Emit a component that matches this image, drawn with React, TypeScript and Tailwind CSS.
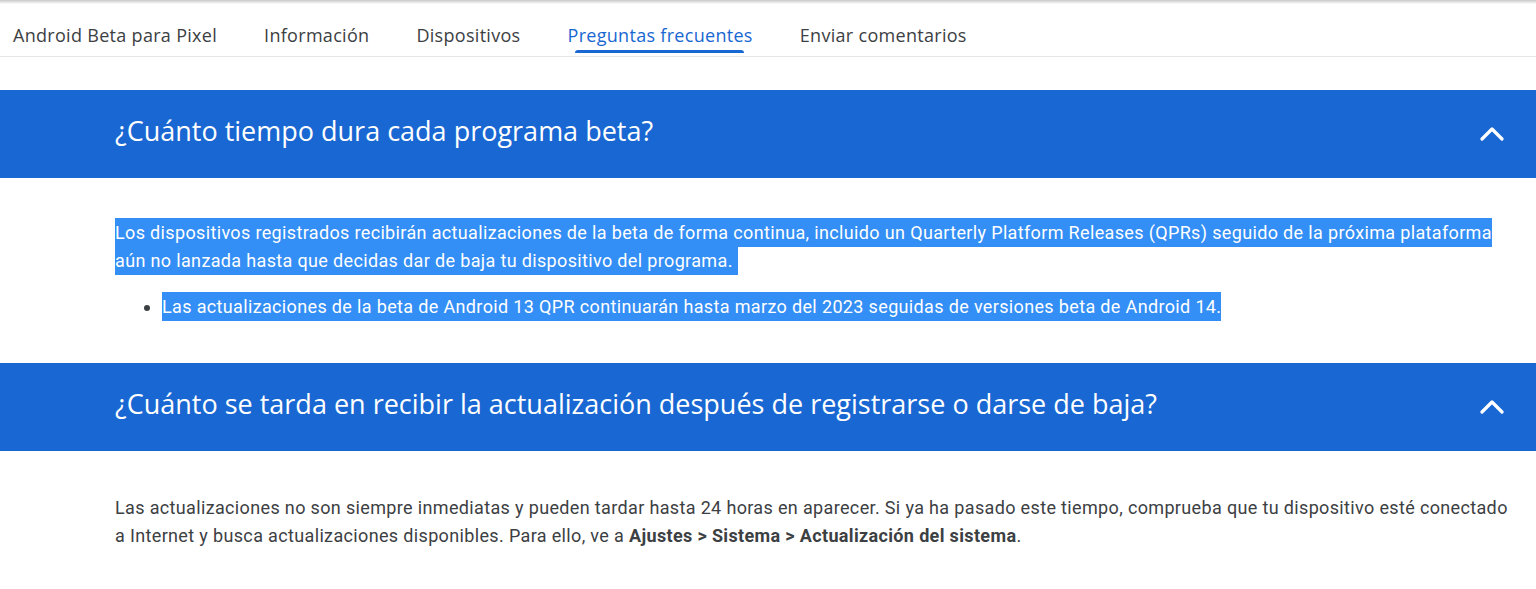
import React from "react";

const tabs = ["Android Beta para Pixel", "Información", "Dispositivos", "Preguntas frecuentes", "Enviar comentarios"];

function Chevron() {
  return (
    <svg width="24" height="24" viewBox="0 0 24 24" className="shrink-0">
      <polyline points="2,17 12,7 22,17" fill="none" stroke="white" strokeWidth="3.2" strokeLinecap="round" strokeLinejoin="round" />
    </svg>
  );
}

function Bar({ title }: { title: string }) {
  return (
    <div className="flex h-[88px] items-center justify-between bg-[#1967d2] pl-[115px] pr-[32px]">
      <h2 className="pb-[5px] text-[27px] text-white" style={{ fontFamily: '"Open Sans", sans-serif' }}>
        {title}
      </h2>
      <Chevron />
    </div>
  );
}

const sel = "bg-[#338ef5] py-[4px] text-white";

export default function App() {
  return (
    <div className="h-screen overflow-hidden bg-white">
      <div className="h-[4px] bg-gradient-to-b from-[#c8c8c8] to-white" />
      <nav
        className="flex h-[53px] items-stretch gap-[47px] border-b border-[#e4e6e8] pl-[13px]"
        style={{ fontFamily: '"Open Sans", sans-serif' }}
      >
        {tabs.map((t) => {
          const active = t === "Preguntas frecuentes";
          return (
            <div key={t} className="relative flex items-center pt-[10px]">
              <span className={`text-[18px] font-medium tracking-[0.3px] ${active ? "text-[#1967d2]" : "text-[#3c4043]"}`}>{t}</span>
              {active && <div className="absolute bottom-[3px] left-[7px] right-[9px] h-[3px] rounded-t-[3px] bg-[#1967d2]" />}
            </div>
          );
        })}
      </nav>

      <div className="mt-[33px]" style={{ fontFamily: 'Roboto, "Liberation Sans", sans-serif' }}>
        <Bar title="¿Cuánto tiempo dura cada programa beta?" />
        <div className="pb-[42px] pl-[115px] pr-[16px] pt-[41px] text-[18px] leading-[28px] tracking-[0.35px] text-[#3c4043]">
          <p>
            <span className={sel}>
              Los dispositivos registrados recibirán actualizaciones de la beta de forma continua, incluido un Quarterly Platform Releases (QPRs) seguido de la próxima plataforma aún no lanzada hasta que decidas dar de baja tu dispositivo del programa.&nbsp;
            </span>
          </p>
          <ul className="mt-[18px] list-disc pl-[47px]">
            <li>
              <span className={sel}>
                Las actualizaciones de la beta de Android 13 QPR continuarán hasta marzo del 2023 seguidas de versiones beta de Android 14.
              </span>
            </li>
          </ul>
        </div>

        <Bar title="¿Cuánto se tarda en recibir la actualización después de registrarse o darse de baja?" />
        <div className="pl-[115px] pr-[16px] pt-[43px] text-[18px] leading-[28px] tracking-[0.35px] text-[#3c4043]">
          <p>
            Las actualizaciones no son siempre inmediatas y pueden tardar hasta 24 horas en aparecer. Si ya ha pasado este tiempo, comprueba que tu dispositivo esté conectado a Internet y busca actualizaciones disponibles. Para ello, ve a{" "}
            <b className="font-bold">Ajustes &gt; Sistema &gt; Actualización del sistema</b>.
          </p>
        </div>
      </div>
    </div>
  );
}
